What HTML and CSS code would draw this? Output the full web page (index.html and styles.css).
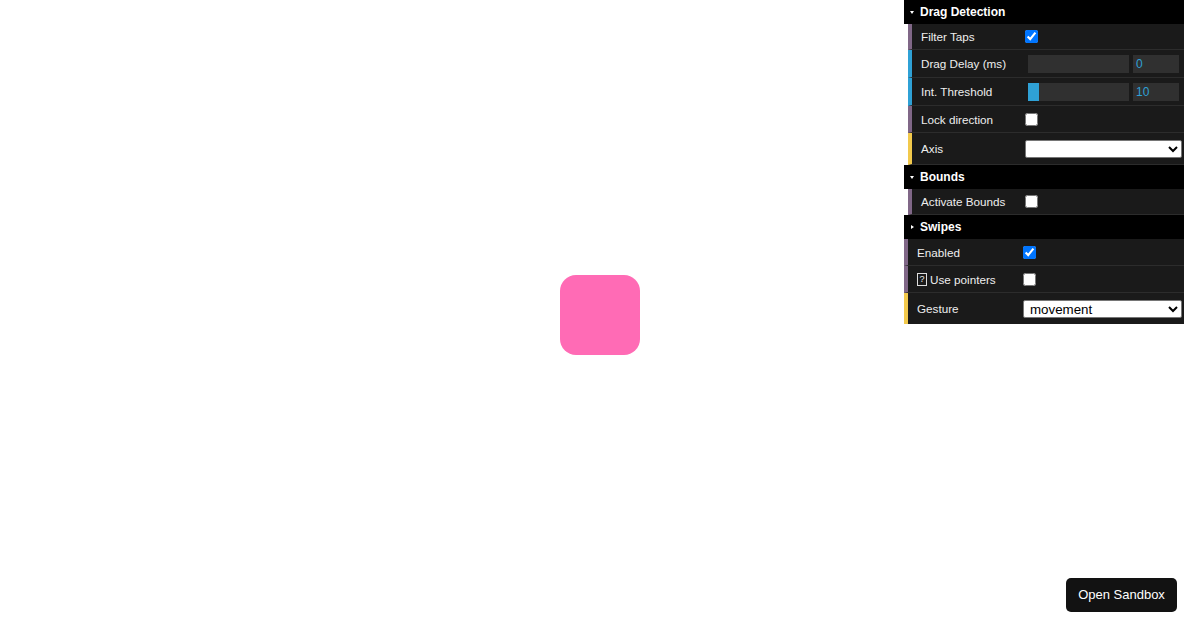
FILE: index.html
```html
<!DOCTYPE html>
<html>
<head>
<meta charset="utf-8">
<link rel="stylesheet" href="styles.css">
</head>
<body>
<div class="stage">
  <div class="box"></div>
</div>

<div class="panel">
  <div class="folder">
    <div class="header"><span class="tri down"></span>Drag Detection</div>
    <ul class="rows nested">
      <li class="row bool short"><span class="name">Filter Taps</span><span class="ctrl"><input type="checkbox" checked></span></li>
      <li class="row num"><span class="name">Drag Delay (ms)</span><span class="ctrl"><span class="slider"><span class="fill" style="width:0%"></span></span><span class="numbox">0</span></span></li>
      <li class="row num"><span class="name">Int. Threshold</span><span class="ctrl"><span class="slider"><span class="fill" style="width:11%"></span></span><span class="numbox">10</span></span></li>
      <li class="row bool"><span class="name">Lock direction</span><span class="ctrl"><input type="checkbox"></span></li>
      <li class="row opt tall"><span class="name">Axis</span><span class="ctrl"><select class="sel"><option></option><option>x</option><option>y</option></select></span></li>
    </ul>
  </div>
  <div class="folder">
    <div class="header"><span class="tri down"></span>Bounds</div>
    <ul class="rows nested">
      <li class="row bool short"><span class="name">Activate Bounds</span><span class="ctrl"><input type="checkbox"></span></li>
    </ul>
  </div>
  <div class="folder">
    <div class="header"><span class="tri right"></span>Swipes</div>
    <ul class="rows top">
      <li class="row bool"><span class="name">Enabled</span><span class="ctrl"><input type="checkbox" checked></span></li>
      <li class="row bool"><span class="name"><span class="qbox">?</span> Use pointers</span><span class="ctrl"><input type="checkbox"></span></li>
      <li class="row opt tall last"><span class="name">Gesture</span><span class="ctrl"><select class="sel wide"><option>movement</option><option>velocity</option></select></span></li>
    </ul>
  </div>
</div>

<button class="sandbox">Open Sandbox</button>
</body>
</html>
```

FILE: styles.css
```css
html, body {
  margin: 0;
  padding: 0;
  background: #fff;
  width: 1200px;
  height: 630px;
  overflow: hidden;
  font-family: "Liberation Sans", Arial, sans-serif;
}

.stage {
  width: 1200px;
  height: 630px;
  display: flex;
  align-items: center;
  justify-content: center;
}

.box {
  width: 80px;
  height: 80px;
  border-radius: 16px;
  background: #ff6bb5;
}

.panel {
  position: absolute;
  top: 0;
  left: 904px;
  width: 280px;
}

.header {
  height: 24px;
  background: #000;
  color: #fff;
  font-weight: bold;
  font-size: 12px;
  line-height: 24px;
  display: flex;
  align-items: center;
  padding-left: 5px;
}

.tri {
  display: inline-block;
  width: 0;
  height: 0;
  margin-right: 6px;
}
.tri.down {
  border-left: 2.5px solid transparent;
  border-right: 2.5px solid transparent;
  border-top: 3px solid #fff;
  margin-left: 1px;
}
.tri.right {
  border-top: 2.5px solid transparent;
  border-bottom: 2.5px solid transparent;
  border-left: 3px solid #fff;
  margin-left: 2px;
  margin-right: 6px;
}

.rows {
  list-style: none;
  margin: 0;
  padding: 0;
}
.rows.nested {
  margin-left: 4px;
}

.row {
  height: 26px;
  border-bottom: 1px solid #2c2c2c;
  background: #1a1a1a;
  border-left: 4px solid #806787;
  display: flex;
  align-items: center;
  color: #eee;
  font-size: 11.7px;
}
.row.short {
  height: 25px;
}
.row.num {
  height: 27px;
  border-left-color: #2fa1d6;
}
.row.tall {
  height: 31px;
}
.row.last {
  border-bottom: none;
}
.row.opt { border-left-color: #f2c94c; }

.nested .name {
  width: 104px;
  padding-left: 9px;
  flex: none;
}
.top .name {
  width: 106px;
  padding-left: 9px;
  flex: none;
  display: flex;
  align-items: center;
}

.ctrl {
  flex: 1;
  display: flex;
  align-items: center;
  padding-right: 2px;
}

.ctrl input[type="checkbox"] {
  margin: 0;
  width: 13px;
  height: 13px;
}

.slider {
  margin-left: 3px;
  width: 101px;
  height: 18px;
  background: #303030;
  display: block;
}
.fill {
  display: block;
  height: 100%;
  background: #2fa1d6;
}
.numbox {
  margin-left: 4px;
  width: 43px;
  height: 18px;
  background: #303030;
  color: #2fa1d6;
  font-size: 12px;
  line-height: 18px;
  padding-left: 3px;
}

.sel {
  width: 157px;
  height: 18px;
  margin: 0;
  font-family: "Liberation Sans", Arial, sans-serif;
  font-size: 13.333px;
  background: #fff;
  color: #000;
  border: 1px solid #767676;
  border-radius: 2px;
  padding: 0 0 0 2px;
}
.sel.wide {
  width: 159px;
}

.qbox {
  display: inline-block;
  width: 8px;
  height: 11px;
  border: 1px solid #ddd;
  font-size: 9px;
  line-height: 11px;
  text-align: center;
  margin-right: 3px;
  box-sizing: content-box;
}

.sandbox {
  position: absolute;
  left: 1066px;
  top: 578px;
  width: 111px;
  height: 34px;
  background: #121212;
  color: #fff;
  border: none;
  border-radius: 5px;
  font-family: "Liberation Sans", Arial, sans-serif;
  font-size: 13px;
  line-height: 33px;
  padding: 0 0 1px 0;
}
```
